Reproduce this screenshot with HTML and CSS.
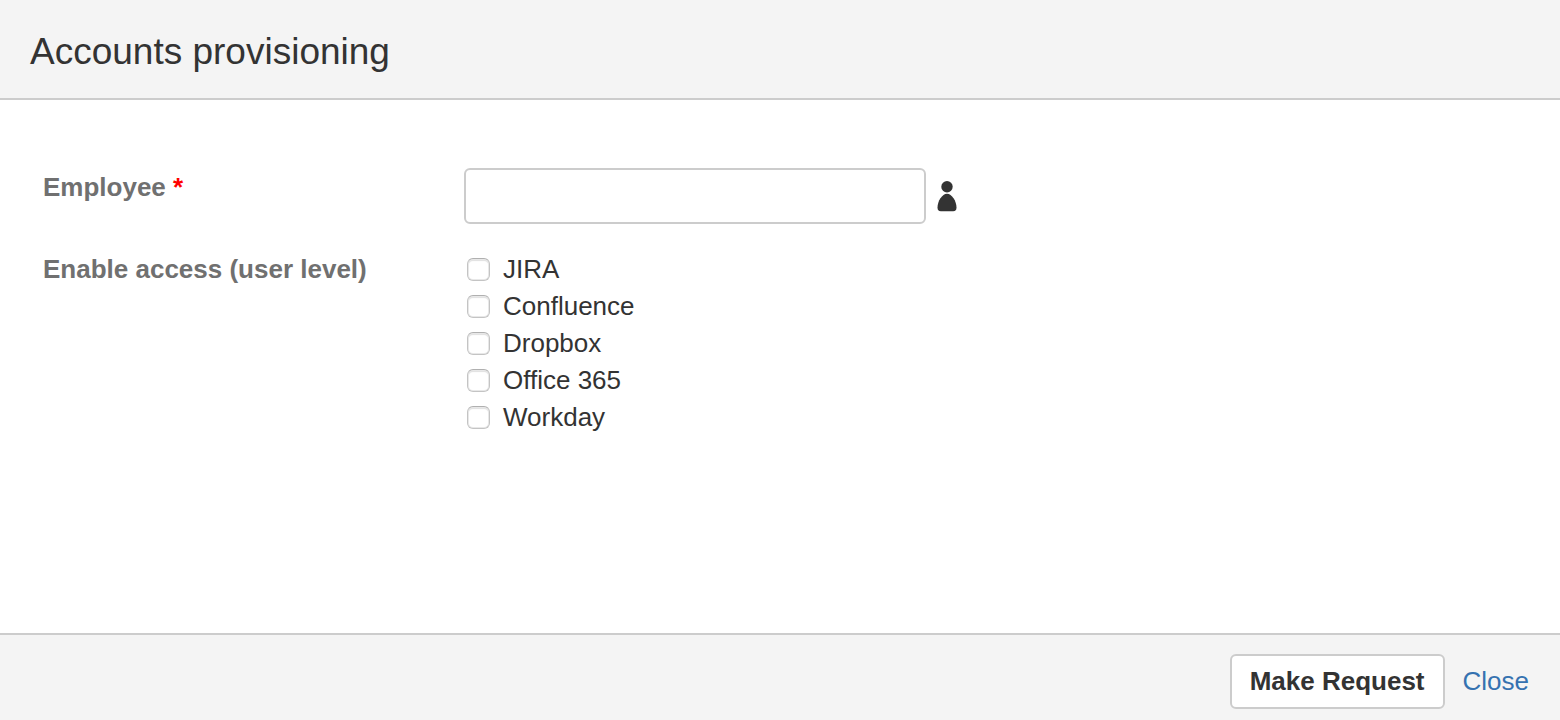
FILE: index.html
```html
<!DOCTYPE html>
<html lang="en">
<head>
<meta charset="utf-8">
<meta name="viewport" content="width=device-width, initial-scale=1">
<title>Accounts provisioning</title>
<link rel="stylesheet" href="styles.css">
</head>
<body>
<form class="dialog">
  <header class="dialog-header">
    <h1 class="dialog-title">Accounts provisioning</h1>
  </header>
  <main class="dialog-body">
    <div class="field">
      <label class="field-label employee-label" for="employee">Employee <span class="required">*</span></label>
      <div class="picker">
        <input class="text-input" type="text" id="employee" name="employee" required>
        <button class="picker-button" type="button" aria-label="Choose a user">
          <svg class="picker-icon" viewBox="0 0 20 32" aria-hidden="true">
            <circle cx="10" cy="6.800" r="5.700"/>
            <path d="M10 13.700C5.200 13.700 .5 21 .5 27.600C.5 30.200 1.500 31.300 3.800 31.300H16.200C18.500 31.300 19.500 30.200 19.500 27.600C19.500 21 14.800 13.700 10 13.700Z"/>
          </svg>
        </button>
      </div>
    </div>
    <div class="field" role="group" aria-labelledby="access-label">
      <span class="field-label" id="access-label">Enable access (user level)</span>
      <div class="options">
        <label class="option"><input class="checkbox" type="checkbox" name="access" value="jira">JIRA</label>
        <label class="option"><input class="checkbox" type="checkbox" name="access" value="confluence">Confluence</label>
        <label class="option"><input class="checkbox" type="checkbox" name="access" value="dropbox">Dropbox</label>
        <label class="option"><input class="checkbox" type="checkbox" name="access" value="office365">Office 365</label>
        <label class="option"><input class="checkbox" type="checkbox" name="access" value="workday">Workday</label>
      </div>
    </div>
  </main>
  <footer class="dialog-footer">
    <button class="submit" type="submit">Make Request</button>
    <a class="close" href="#">Close</a>
  </footer>
</form>
</body>
</html>
```
FILE: styles.css
```css
* {
  box-sizing: border-box;
}

body {
  margin: 0;
  background: #fff;
  color: #333;
  font-family: "Liberation Sans", Arial, sans-serif;
  font-size: 26px;
  line-height: 37px;
}

.dialog {
  display: flex;
  flex-direction: column;
  min-height: 100vh;
}

.dialog-header {
  padding: 33px 30px 27px;
  border-bottom: 2px solid #ccc;
  background: #f4f4f4;
}

.dialog-title {
  margin: 0;
  font-size: 37px;
  font-weight: 400;
  line-height: 38px;
}

.dialog-body {
  display: flex;
  flex: 1;
  flex-direction: column;
  gap: 27px;
  padding: 68px 43px;
}

.field {
  display: flex;
  align-items: flex-start;
}

.field-label {
  flex: 0 0 421px;
  color: #707070;
  font-weight: 700;
}

.employee-label {
  padding-top: 1px;
}

.required {
  color: #f00;
}

.picker {
  display: flex;
  align-items: center;
  gap: 11px;
}

.text-input {
  width: 462px;
  height: 56px;
  padding: 8px;
  border: 2px solid #ccc;
  border-radius: 6px;
  background: #fff;
  color: inherit;
  font: inherit;
}

.picker-button {
  padding: 0;
  border: 0;
  background: none;
  cursor: pointer;
}

.picker-icon {
  display: block;
  width: 20px;
  height: 32px;
  fill: #333;
}

.options {
  display: flex;
  flex-direction: column;
}

.option {
  display: flex;
  align-items: center;
  gap: 13px;
  padding-left: 3px;
}

.checkbox {
  appearance: none;
  width: 23px;
  height: 23px;
  margin: 0;
  border: 1px solid #c4c4c4;
  border-top-color: #b0b0b0;
  border-radius: 6px;
  background: #fff;
  box-shadow: inset 0 0 0 1px #e8e8e8, inset 0 2px 1px #e0e0e0;
}

.checkbox:checked {
  background: #3572b0;
}

.dialog-footer {
  display: flex;
  align-items: center;
  justify-content: flex-end;
  gap: 18px;
  padding: 19px 31px 11px;
  border-top: 2px solid #ccc;
  background: #f4f4f4;
}

.submit {
  height: 55px;
  padding: 0 18px;
  border: 2px solid #ccc;
  border-radius: 6px;
  background: #fff;
  color: #333;
  font: inherit;
  font-weight: 700;
  cursor: pointer;
}

.close {
  color: #3572b0;
  text-decoration: none;
}
```
